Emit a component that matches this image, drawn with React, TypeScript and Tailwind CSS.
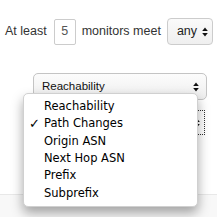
import React from "react";

/* ------------------------------------------------------------------ */
/* small up/down select arrows                                        */
/* ------------------------------------------------------------------ */
function UpDown({ className = "" }: { className?: string }) {
  return (
    <svg width="6" height="10" viewBox="0 0 6 10" className={className}>
      <path d="M3 0.5 L5.8 4 L0.2 4 Z" fill="#111" />
      <path d="M3 9.5 L5.8 6 L0.2 6 Z" fill="#111" />
    </svg>
  );
}

const OPTIONS = ["Reachability", "Path Changes", "Origin ASN", "Next Hop ASN", "Prefix", "Subprefix"];
const SELECTED = "Path Changes";

export default function App() {
  return (
    <div className="relative flex h-[217px] w-[217px] flex-col overflow-hidden bg-white font-['Liberation_Sans',Arial,sans-serif] text-[#333]">
      {/* ---- top sentence ---- */}
      <div className="mt-[18px] flex h-[27px] items-center pl-[5px] text-[12.5px]">
        <span>At least</span>
        <div className="ml-[7px] flex h-[26px] w-[22px] items-center justify-center rounded-[2px] border border-[#ccc] bg-white text-[#555]">
          5
        </div>
        <span className="ml-[6px]">monitors meet</span>
        <div className="ml-[6px] flex h-[27px] w-[46px] items-center rounded-[4px] border border-[#ccc] bg-gradient-to-b from-[#fafafa] to-[#efefef] pl-[9px]">
          <span className="text-[#222]">any</span>
          <UpDown className="ml-[5px]" />
        </div>
      </div>

      {/* ---- metric select ---- */}
      <div className="ml-[33px] mt-[28px] flex h-[27px] w-[174px] items-center justify-between rounded-[5px] border border-[#c4c4c4] bg-gradient-to-b from-[#fcfcfc] to-[#eeeeee] pl-[8px] pr-[7px] text-[11.5px] text-[#111]">
        <span>Reachability</span>
        <UpDown />
      </div>

      {/* ---- focused select behind the menu ---- */}
      <div className="ml-[33px] mt-[10px] flex h-[25px] w-[172px] items-center justify-end border border-dotted border-[#333] pr-[4px]">
        <UpDown />
      </div>

      {/* ---- footer band ---- */}
      <div className="mt-auto h-[23px] border-t border-[#e8e8e8] bg-[#f8f8f8]" />

      {/* ---- open dropdown menu ---- */}
      <div className="absolute left-[23px] top-[93px] w-[175px] rounded-[5px] border border-[#d0d0d0] bg-white py-[4px] font-['DejaVu_Sans',sans-serif] text-[11.5px] text-black shadow-[0_6px_12px_rgba(0,0,0,0.35)]">
        {OPTIONS.map((o) => (
          <div key={o} className="relative flex h-[17.3px] items-center pl-[20px]">
            {o === SELECTED && <span className="absolute left-[5px] text-[13px]">✓</span>}
            {o}
          </div>
        ))}
      </div>
    </div>
  );
}
